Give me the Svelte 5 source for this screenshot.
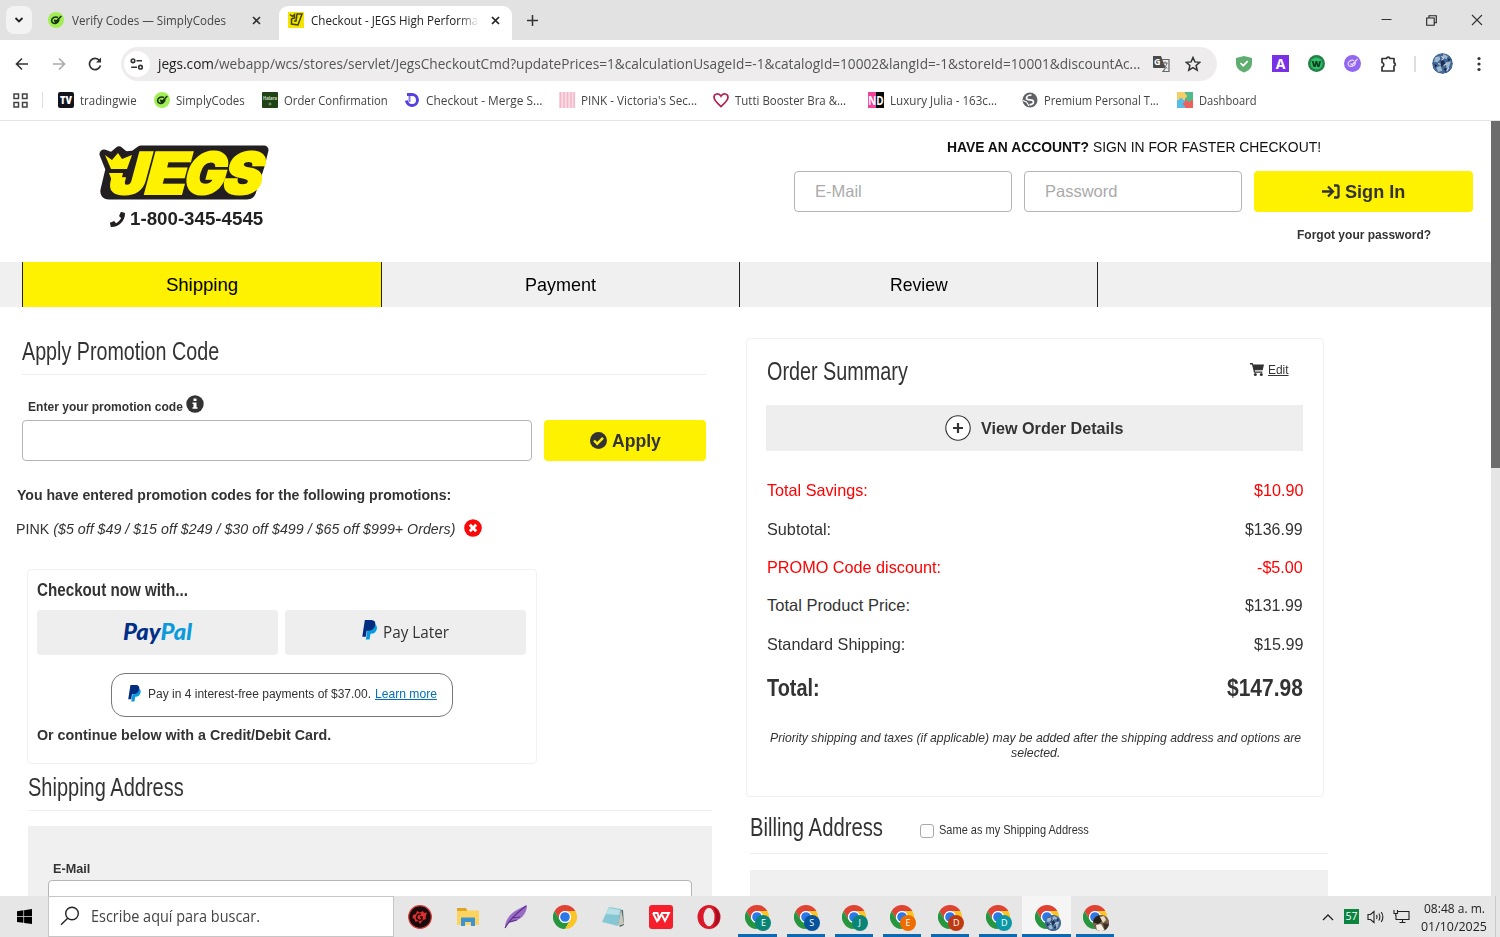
<script>
  const bookmarks = [
    { icon: "tv", label: "tradingwie", text: 57, width: 96 },
    { icon: "simply", label: "SimplyCodes", text: 69, width: 108 },
    { icon: "order", label: "Order Confirmation", text: 104, width: 142 },
    { icon: "merge", label: "Checkout - Merge S...", text: 116, width: 155 },
    { icon: "pink", label: "PINK - Victoria's Sec...", text: 116, width: 154 },
    { icon: "heart", label: "Tutti Booster Bra &...", text: 111, width: 155 },
    { icon: "nd", label: "Luxury Julia - 163c...", text: 107, width: 154 },
    { icon: "globe", label: "Premium Personal T...", text: 115, width: 155 },
    { icon: "puzzle", label: "Dashboard", text: 58, width: 90 },
  ];

  const steps = [
    { name: "Shipping", text: 72 },
    { name: "Payment", text: 71 },
    { name: "Review", text: 58 },
  ];

  const rows = [
    { label: "Total Savings:", value: "$10.90", lw: 101, vw: 49, red: true },
    { label: "Subtotal:", value: "$136.99", lw: 64, vw: 58 },
    { label: "PROMO Code discount:", value: "-$5.00", lw: 174, vw: 46, red: true },
    { label: "Total Product Price:", value: "$131.99", lw: 143, vw: 58 },
    { label: "Standard Shipping:", value: "$15.99", lw: 138, vw: 49 },
  ];

  const profiles = [
    { letter: "E", color: "#0b8478" },
    { letter: "S", color: "#07539c" },
    { letter: "J", color: "#0b8478" },
    { letter: "E", color: "#ef6c00" },
    { letter: "D", color: "#bf3a12" },
    { letter: "D", color: "#0b97a5" },
    { letter: "", color: "#4f6f9f", active: true },
    { letter: "", color: "#8a745c" },
  ];

  const logoLetters = [
    { char: "J", x: 7, width: 37 },
    { char: "E", x: 42, width: 42 },
    { char: "G", x: 81, width: 41 },
    { char: "S", x: 120, width: 39 },
  ];

  let email = "";
  let password = "";
  let promoCode = "";
  let shippingEmail = "";
  let sameAddress = false;

  // condenses a line of text to the given width
  function fit(node, width) {
    const natural = node.offsetWidth;
    node.style.transform = `scaleX(${width / natural})`;
    node.style.marginRight = `${width - natural}px`;
  }
</script>

{#snippet simplyLogo()}
  <svg width="16" height="16" viewBox="0 0 16 16">
    <circle cx="8" cy="8" r="8" fill="#a4ee55" />
    <path d="M10 5.5C7 4 3.5 6 3.6 8.800c.1 2.600 3.600 3.400 5.800 1.600 1-.8 1.600-2 1.400-3L8 9.200 6.300 8l1.400 2L13.300 4" fill="none" stroke="#17330b" stroke-width="1.600" />
  </svg>
{/snippet}

{#snippet chrome()}
  <svg width="24" height="24" viewBox="0 0 48 48">
    <path d="M24 12h20.800A24 24 0 0 0 3.200 12l10.400 18A12 12 0 0 1 24 12z" fill="#df4334" />
    <path d="M13.600 30L3.200 12A24 24 0 0 0 24 48l10.400-18a12 12 0 0 1-20.800 0z" fill="#27963f" />
    <path d="M34.400 30L24 48a24 24 0 0 0 20.800-36H24a12 12 0 0 1 10.400 18z" fill="#fbc526" />
    <circle cx="24" cy="24" r="12" fill="#fff" />
    <circle cx="24" cy="24" r="9.600" fill="#2c78e8" />
  </svg>
{/snippet}

{#snippet paypalMark(height)}
  <svg {height} width={height * 0.76} viewBox="0 0 16 21">
    <path d="M4 20.500L6.500 6l7.500-1.500q2.500 2 1.500 5.500-1.300 4.500-6 4.500H9l-1 6z" fill="#0a9bdf" />
    <path d="M3 0h7q4.500.3 4 5-1 6-7 6.200H5L4 17.500H.3z" fill="#012c80" />
  </svg>
{/snippet}

{#snippet earth(size)}
  <svg width={size} height={size} viewBox="0 0 20 20">
    <circle cx="10" cy="10" r="10" fill="#426894" />
    <path d="M3 4l4-1 1 3-3 3-3-1zM11 1l4 2-1 3-4-2zM13 9l5-1-2 6-2 1zM4 14l4-2 2 5-4 1z" fill="#9fb8cf" />
    <path d="M8 6l3 1 2 4-4 2zM2 10l3 2-2 2zM15 5l3 1-3 2zM11 15l3-1-1 4z" fill="#1b2d56" />
    <path d="M9 3l2 2-2 2M6 10l2 1M11 12l3-2M14 17l2-3" stroke="#d7e2ea" fill="none" />
  </svg>
{/snippet}

<div class="screen">
  <div class="tabstrip">
    <button class="tab-search" aria-label="Search tabs">
      <svg width="10" height="10" viewBox="0 0 10 10"><path d="M1.500 3L5 6.500 8.500 3" fill="none" stroke="#222" stroke-width="1.800" /></svg>
    </button>
    <div class="tab">
      {@render simplyLogo()}
      <span class="fit" use:fit={154}>Verify Codes — SimplyCodes</span>
      <svg class="close" width="9" height="9" viewBox="0 0 9 9"><path d="M1 1l7 7M8 1L1 8" stroke="#333" stroke-width="1.600" /></svg>
    </div>
    <div class="tab active">
      <svg width="16" height="16" viewBox="0 0 16 16">
        <rect width="16" height="16" fill="#f3e500" />
        <path d="M2 2.500l2.500 2 2-2v3.500l-3 1v5l6.500 1L14 2H9L8 9H6" fill="none" stroke="#44420a" stroke-width="1.500" />
      </svg>
      <div class="tab-title"><span class="fit" use:fit={167}>Checkout - JEGS High Performa</span></div>
      <svg class="close" width="9" height="9" viewBox="0 0 9 9"><path d="M1 1l7 7M8 1L1 8" stroke="#222" stroke-width="1.700" /></svg>
    </div>
    <svg class="new-tab" width="11" height="11" viewBox="0 0 11 11"><path d="M5.500 0v11M0 5.500h11" stroke="#333" stroke-width="1.500" /></svg>
    <div class="window-buttons">
      <svg width="11" height="11" viewBox="0 0 11 11"><path d="M.5 4.500h10" stroke="#333" /></svg>
      <svg width="11" height="11" viewBox="0 0 11 11" fill="none" stroke="#222" stroke-width="1.100"><path d="M.7 3h7.500v7.300H.7zM3 3V.8h7.300v7H8.200" /></svg>
      <svg width="12" height="12" viewBox="0 0 12 12"><path d="M1 1l10 10M11 1L1 11" stroke="#333" stroke-width="1.100" /></svg>
    </div>
  </div>

  <div class="toolbar">
    <div class="nav-buttons">
      <svg width="14" height="14" viewBox="0 0 14 14" fill="none" stroke="#333" stroke-width="1.600"><path d="M13 7H2M7 1.500L1.500 7 7 12.500" /></svg>
      <svg width="14" height="14" viewBox="0 0 14 14" fill="none" stroke="#aaa" stroke-width="1.600"><path d="M1 7h11M7 1.500L12.500 7 7 12.500" /></svg>
      <svg width="14" height="14" viewBox="0 0 14 14" fill="none" stroke="#333" stroke-width="1.700"><path d="M12.500 8.500A5.600 5.600 0 1 1 11.500 3.500" /><path d="M13 .5v5H8z" fill="#333" stroke="none" /></svg>
    </div>
    <div class="omnibox">
      <div class="site-info">
        <svg width="14" height="14" viewBox="0 0 14 14" fill="none" stroke="#333" stroke-width="1.600"><circle cx="3" cy="3.800" r="1.800" /><path d="M6.500 3.800H12M1.200 10.200H7" /><circle cx="10.500" cy="10.200" r="1.800" /></svg>
      </div>
      <span class="fit url" use:fit={982}><b>jegs.com</b>/webapp/wcs/stores/servlet/JegsCheckoutCmd?updatePrices=1&calculationUsageId=-1&catalogId=10002&langId=-1&storeId=10001&discountAc...</span>
      <svg width="18" height="18" viewBox="0 0 18 18">
        <path d="M1 1h8l4.500 12H2a1 1 0 0 1-1-1z" fill="#4a4a4a" />
        <path d="M10 4.500h7v12h-6l2.500-3.500" fill="none" stroke="#666" stroke-width="1.200" />
        <text x="2" y="10" font-size="9" font-weight="700" fill="#fff">G</text>
        <path d="M10.500 8h5M13 6.500V8M15 8c-.5 2.500-2 4-3.500 4.800M11.800 9.500c.8 1.700 2 2.800 3.500 3.800" fill="none" stroke="#666" />
      </svg>
      <svg width="16" height="16" viewBox="0 0 16 16" fill="none" stroke="#333" stroke-width="1.500"><path d="M8 1.500l1.900 4.400 4.800.4-3.600 3.200 1.100 4.700L8 11.700l-4.200 2.500 1.100-4.700-3.600-3.200 4.800-.4z" /></svg>
    </div>
    <div class="extensions">
      <svg width="18" height="18" viewBox="0 0 18 18"><path d="M9 1l8 2v5c0 5-3.500 8-8 9.500C4.500 16 1 13 1 8V3z" fill="#5fae70" /><path d="M5.500 8l2.700 2.700 4.500-4.500" fill="none" stroke="#fff" stroke-width="1.700" /></svg>
      <svg width="17" height="17" viewBox="0 0 17 17"><rect width="17" height="17" fill="#7a30e5" /><text x="8.500" y="13.500" font-size="14" font-weight="700" fill="#fff" text-anchor="middle">A</text></svg>
      <svg width="17" height="17" viewBox="0 0 17 17"><circle cx="8.500" cy="8.500" r="8.500" fill="#24804b" /><circle cx="8.500" cy="8.500" r="6" fill="#2fbf66" /><text x="8.500" y="12" font-size="9" font-weight="800" fill="#08351c" text-anchor="middle">W</text></svg>
      <svg width="17" height="17" viewBox="0 0 17 17"><circle cx="8.500" cy="8.500" r="8.500" fill="#9266f2" /><path d="M10 5.500C7 4.500 4 6.500 4 9c.3 2.800 4 3 6 1.500 1.300-1 1.600-2.300 1.200-3.300L8 9.800 6.500 8.500M8 10l5.500-6" fill="none" stroke="#e6dcff" stroke-width="1.200" /></svg>
      <svg width="18" height="18" viewBox="0 0 18 18"><path d="M2 3.500h4.500a1.800 1.800 0 0 1 3.500 0h4v4.300a1.700 1.700 0 0 1 0 3.300v4.900H2v-4a2.300 2.300 0 0 0 0-4.500z" fill="none" stroke="#333" stroke-width="1.700" stroke-linejoin="round" /></svg>
    </div>
    <span class="bar"></span>
    <div class="avatar">{@render earth(21)}</div>
    <svg class="dots" width="4" height="16" viewBox="0 0 4 16" fill="#333"><circle cx="2" cy="2.500" r="1.600" /><circle cx="2" cy="8" r="1.600" /><circle cx="2" cy="13.500" r="1.600" /></svg>
  </div>

  <div class="bookmarks">
    <svg class="apps" width="15" height="15" viewBox="0 0 15 15" fill="none" stroke="#444" stroke-width="1.500"><path d="M1 1h4.500v4.500H1zM9.500 1H14v4.500H9.500zM1 9.500h4.500V14H1zM9.500 9.500H14V14H9.500z" /></svg>
    <span class="bar"></span>
    {#each bookmarks as mark}
      <div class="bookmark" style="width: {mark.width}px">
        {#if mark.icon === "simply"}
          {@render simplyLogo()}
        {:else}
          <svg width="16" height="16" viewBox="0 0 16 16">
            {#if mark.icon === "tv"}
              <rect width="16" height="16" rx="2" fill="#12131c" />
              <text x="8" y="11.800" font-size="10.500" font-weight="800" fill="#fff" text-anchor="middle" textLength="12" lengthAdjust="spacingAndGlyphs">TV</text>
            {:else if mark.icon === "order"}
              <rect width="16" height="16" rx="1" fill="#1f4217" />
              <text x="8" y="8" font-size="4.500" font-weight="700" fill="#cfe0c8" text-anchor="middle" textLength="14" lengthAdjust="spacingAndGlyphs">Halara</text>
              <path d="M8 10.500v3M6.500 12h3" stroke="#8aa682" />
            {:else if mark.icon === "merge"}
              <path d="M3 2.500h5a5.500 5.500 0 1 1-5.500 6" fill="none" stroke="#5540e0" stroke-width="3" />
              <path d="M5.500 4v6" stroke="#8878f0" stroke-width="2" />
            {:else if mark.icon === "pink"}
              <rect width="16" height="16" fill="#fbdde6" />
              <path d="M1.500 0v16M5 0v16M8.500 0v16M12 0v16M15.300 0v16" stroke="#f4b6c9" stroke-width="1.600" />
            {:else if mark.icon === "heart"}
              <path d="M8 14.500C4 11 1 8.500 1 5.300 1 1.500 6 .7 8 4.200c2-3.500 7-2.700 7 1.100 0 3.200-3 5.700-7 9.200z" fill="none" stroke="#ad2450" stroke-width="1.700" />
            {:else if mark.icon === "nd"}
              <rect width="8" height="16" fill="#f0429a" /><rect x="8" width="8" height="16" fill="#0a0a0a" />
              <text x=".3" y="12.500" font-size="12" font-weight="700" fill="#fff" textLength="15.400" lengthAdjust="spacingAndGlyphs">ND</text>
            {:else if mark.icon === "globe"}
              <circle cx="8" cy="8" r="7.500" fill="#5f6265" />
              <path d="M9.500 3C6.500 3 4.500 4.500 4.500 6s2 1.800 3.500 1.800 3.500.5 3.500 2.200-2 2.800-4 2.500" fill="none" stroke="#fff" stroke-width="1.700" />
              <path d="M1 8.500l3.500 1.500 2.500 4" fill="none" stroke="#fff" stroke-width="1.200" />
            {:else}
              <path d="M0 0h8v8H0z" fill="#f5ce67" /><path d="M8 0h8v8H8z" fill="#51b98a" />
              <path d="M0 8h8v8H0z" fill="#54bde8" /><path d="M8 8h8v8H8z" fill="#ed615d" />
              <circle cx="8" cy="4" r="2" fill="#f5ce67" /><circle cx="12" cy="8" r="2" fill="#51b98a" />
              <circle cx="4" cy="8" r="2" fill="#54bde8" /><circle cx="8" cy="12" r="2" fill="#ed615d" />
            {/if}
          </svg>
        {/if}
        <span class="fit" use:fit={mark.text}>{mark.label}</span>
      </div>
    {/each}
  </div>

  <div class="viewport">
    <main>
      <header>
        <div class="brand">
          <svg class="logo" width="172" height="56" viewBox="0 0 172 56">
            <path d="M42 5h123l-4 16-8 24q-1 5-5 5H10q-5 0-4-5l5-21L5 9l8 3 7-6 6 5 9-1z" fill="#231f20" stroke="#231f20" stroke-width="9" stroke-linejoin="round" />
            <g transform="translate(1 49) skewX(-15)">
              {#each logoLetters as letter}
                <text x={letter.x} y="0" class="logo-text" textLength={letter.width} lengthAdjust="spacingAndGlyphs">{letter.char}</text>
              {/each}
            </g>
            <path d="M6 10l7 5 6-7 4 6 10-4-5 14H12z" fill="#fff200" stroke="#231f20" stroke-width="5" stroke-linejoin="round" paint-order="stroke" />
            <path d="M11 25h17" stroke="#231f20" stroke-width="2" />
            <path d="M10 28h14l-2 8h-9z" fill="#fff200" />
          </svg>
          <div class="phone">
            <svg width="15" height="15" viewBox="0 0 512 512"><path d="M493 25L389 1c-11-3-23 3-28 14l-48 112c-4 10-1 21 7 28l61 50c-36 76-98 139-176 176l-50-61c-7-8-18-11-28-7L15 361c-11 5-17 17-14 28l24 104c3 11 12 19 24 19 256 0 463-207 463-463 0-12-8-21-19-24z" fill="#231f20" /></svg>
            <span class="fit" use:fit={133}>1-800-345-4545</span>
          </div>
        </div>
        <form class="sign-in" on:submit|preventDefault>
          <p><span class="fit" use:fit={374}><b>HAVE AN ACCOUNT?</b> SIGN IN FOR FASTER CHECKOUT!</span></p>
          <div class="fields">
            <input type="text" placeholder="E-Mail" bind:value={email} />
            <input type="password" placeholder="Password" bind:value={password} />
            <button class="yellow">
              <svg width="18" height="15" viewBox="0 0 18 15" fill="none" stroke="#333" stroke-width="2.300"><path d="M0 7.500h10M6 2.500l5 5-5 5M12 1.500h3q1.500 0 1.500 1.500v9q0 1.500-1.500 1.500h-3" /></svg>
              <span class="fit" use:fit={60}>Sign In</span>
            </button>
          </div>
          <div class="forgot"><span class="fit" use:fit={134}>Forgot your password?</span></div>
        </form>
      </header>

      <nav>
        {#each steps as step, i}
          <div class="step" class:current={i === 0}><span class="fit" use:fit={step.text}>{step.name}</span></div>
        {/each}
      </nav>

      <div class="columns">
        <section class="left">
          <h2 class="promo-title"><span class="fit" use:fit={197}>Apply Promotion Code</span></h2>
          <label class="promo-label" for="promo">
            <span class="fit" use:fit={155}>Enter your promotion code</span>
            <svg width="18" height="18" viewBox="0 0 18 18"><circle cx="9" cy="9" r="8.700" fill="#333" /><path d="M7.500 3.500h3V6h-3zM6.500 7.500h4v4.700h1v1.600h-5v-1.600h1V9h-1z" fill="#fff" /></svg>
          </label>
          <div class="promo-row">
            <input id="promo" type="text" bind:value={promoCode} />
            <button class="yellow">
              <svg width="17" height="17" viewBox="0 0 17 17"><circle cx="8.500" cy="8.500" r="8.500" fill="#333" /><path d="M4 8.500l3.200 3.200L13 5.800" fill="none" stroke="#fff200" stroke-width="2.400" /></svg>
              <span class="fit" use:fit={49}>Apply</span>
            </button>
          </div>
          <p class="entered"><span class="fit" use:fit={434}>You have entered promotion codes for the following promotions:</span></p>
          <div class="applied">
            <span class="fit" use:fit={439}>PINK <i>($5 off $49 / $15 off $249 / $30 off $499 / $65 off $999+ Orders)</i></span>
            <svg width="18" height="18" viewBox="0 0 18 18"><circle cx="9" cy="9" r="8.800" fill="#f80808" /><path d="M5.800 5.800l6.400 6.400M12.200 5.800l-6.400 6.400" stroke="#fff" stroke-width="2.800" /></svg>
          </div>

          <div class="express">
            <h3><span class="fit" use:fit={151}>Checkout now with...</span></h3>
            <div class="pay-buttons">
              <button aria-label="PayPal">
                <svg width="72" height="32" viewBox="0 0 72 32">
                  <text x="1" y="22.500" class="paypal" textLength="69" lengthAdjust="spacingAndGlyphs"><tspan fill="#012f87">Pay</tspan><tspan fill="#0b9bdc">Pal</tspan></text>
                </svg>
              </button>
              <button class="later">
                {@render paypalMark(20)}
                <span class="fit pay-later" use:fit={66}>Pay Later</span>
              </button>
            </div>
            <div class="pay-message">
              {@render paypalMark(17)}
              <span class="fit" use:fit={223}>Pay in 4 interest-free payments of $37.00.</span>
              <a class="fit" href="#learn" use:fit={62}>Learn more</a>
            </div>
            <p class="or-card"><span class="fit" use:fit={294}>Or continue below with a Credit/Debit Card.</span></p>
          </div>

          <div class="address">
            <h2><span class="fit" use:fit={156}>Shipping Address</span></h2>
            <div class="address-form">
              <label for="ship-email"><span class="fit" use:fit={37}>E-Mail</span></label>
              <input id="ship-email" type="text" bind:value={shippingEmail} />
            </div>
          </div>
        </section>

        <section class="right">
          <div class="summary">
            <div class="summary-head">
              <h2><span class="fit" use:fit={141}>Order Summary</span></h2>
              <div class="edit">
                <svg width="14" height="13" viewBox="0 0 14 13" fill="#333"><path d="M0 0h2.800l.4 1.600H14l-1.300 5.600H4.800l.3 1.300h7.300v1.300H4L2 1.400H0z" /><circle cx="5.300" cy="11.400" r="1.500" /><circle cx="11.300" cy="11.400" r="1.500" /></svg>
                <a class="fit" href="#cart" use:fit={21}>Edit</a>
              </div>
            </div>
            <button class="details">
              <svg width="26" height="26" viewBox="0 0 26 26"><circle cx="13" cy="13" r="12.200" fill="#fff" stroke="#333" stroke-width="1.100" /><path d="M13 8v10M8 13h10" stroke="#333" stroke-width="2.200" /></svg>
              <span class="fit" use:fit={143}>View Order Details</span>
            </button>
            <div class="rows">
              {#each rows as row}
                <div class="row" class:red={row.red}>
                  <span class="fit" use:fit={row.lw}>{row.label}</span>
                  <span class="fit" use:fit={row.vw}>{row.value}</span>
                </div>
              {/each}
            </div>
            <div class="total">
              <span class="fit" use:fit={53}>Total:</span>
              <span class="fit" use:fit={76}>$147.98</span>
            </div>
            <div class="note">
              <span class="fit" use:fit={531}>Priority shipping and taxes (if applicable) may be added after the shipping address and options are</span>
              <span class="fit" use:fit={49}>selected.</span>
            </div>
          </div>
          <div class="billing">
            <div class="billing-head">
              <h2><span class="fit" use:fit={133}>Billing Address</span></h2>
              <input id="same" type="checkbox" bind:checked={sameAddress} />
              <label for="same"><span class="fit" use:fit={150}>Same as my Shipping Address</span></label>
            </div>
            <div class="billing-form"></div>
          </div>
        </section>
      </div>
    </main>
    <div class="scrollbar"><div class="thumb"></div></div>
  </div>

  <footer class="taskbar">
    <div class="start">
      <svg width="15" height="15" viewBox="0 0 15 15"><path d="M0 2.200L6.400 1.300v5.900H0zM7.100 1.200L15 0v7.200H7.100zM0 7.900h6.400v5.900L0 12.900zM7.100 7.900H15V15l-7.900-1.100z" /></svg>
    </div>
    <div class="search">
      <svg width="20" height="20" viewBox="0 0 20 20" fill="none" stroke="#222" stroke-width="1.400"><circle cx="12" cy="7.500" r="6.300" /><path d="M7.700 12.200L1 18.800" /></svg>
      <span class="fit" use:fit={169}>Escribe aquí para buscar.</span>
    </div>
    <div class="apps-row">
      <div class="app"><svg width="24" height="24" viewBox="0 0 24 24"><circle cx="12" cy="12" r="11.300" fill="#190b0c" stroke="#d63b3b" stroke-width="1.200" /><path d="M5 10l3-1 1-3 3 1.500L15 6l1 2 3-.5-1.500 4.500.5 2-3 1-3 4-1.500-3-3 1-1-3-2-1z" fill="#e12e2e" /><path d="M13 9.500a3 3 0 1 0 1 4.500v-2h-2" fill="none" stroke="#190b0c" stroke-width="1.400" /></svg></div>
      <div class="app"><svg width="24" height="20" viewBox="0 0 24 20"><path d="M1 1h9l2 2.500h11V18H1z" fill="#fbd35e" /><path d="M1 1h9l1 3H1z" fill="#e0a524" /><path d="M5 19v-7.500q0-1 1-1h12q1 0 1 1V19h-4v-4H9v4z" fill="#3e93cf" /></svg></div>
      <div class="app"><svg width="24" height="25" viewBox="0 0 24 25"><path d="M1 24C1 14 8 7 23 1c0 9-6 16-19 18z" fill="#9b6cc4" /><path d="M1 24C7 14 13 9 22 2M5 18l8-2M8 14l8-1" fill="none" stroke="#5c2f91" stroke-width="1.200" /></svg></div>
      <div class="app">{@render chrome()}</div>
      <div class="app"><svg width="24" height="24" viewBox="0 0 24 24"><path d="M8 3l14 2 1 15-4 2z" fill="#586b70" /><path d="M8 2l12 2-3 17L1 17z" fill="#86c7d6" /><path d="M8 3l11 2-1 5L5 9z" fill="#b9e0e7" /><path d="M20 4l3 15-6 2z" fill="#c8c8ba" /></svg></div>
      <div class="app"><svg width="24" height="24" viewBox="0 0 24 24"><rect width="24" height="24" rx="3" fill="#f5202c" /><path d="M4 8h4.500l1.500 6 3-6h7l-4 8-3-6M4 8l4 8 3-5" fill="none" stroke="#fff" stroke-width="1.900" /></svg></div>
      <div class="app"><svg width="24" height="24" viewBox="0 0 24 24"><ellipse cx="12" cy="12" rx="11.500" ry="12" fill="#d9182a" /><path d="M16 2c4 4 4 16 0 20 9-4 9-16 0-20z" fill="#a50f20" /><ellipse cx="12" cy="12" rx="5.500" ry="9.300" fill="#e7e7e7" /></svg></div>
      {#each profiles as profile, i}
        <div class="app open" class:front={profile.active}>
          <div class="profile">
            {@render chrome()}
            <div class="badge" style="background: {profile.color}">
              {#if profile.active}{@render earth(16)}{:else if i === 7}
                <svg width="16" height="16" viewBox="0 0 16 16"><path d="M0 0h16v16H0z" fill="#77634c" /><path d="M0 0h6l3 6-4 3-5-2z" fill="#282019" /><path d="M7 2l4-1 2 4-3 3z" fill="#ead9c3" /><path d="M3 10l5-1 4 7H4z" fill="#f4eee5" /><path d="M10 8l6 1v7h-4z" fill="#3a3026" /></svg>
              {:else}{profile.letter}{/if}
            </div>
          </div>
        </div>
      {/each}
    </div>
    <div class="tray">
      <svg width="12" height="8" viewBox="0 0 12 8"><path d="M1 7l5-5 5 5" fill="none" stroke="#222" stroke-width="1.300" /></svg>
      <span class="temp">57</span>
      <svg width="18" height="14" viewBox="0 0 18 14" fill="none" stroke="#222" stroke-width="1.100"><path d="M1 4.500h2.500L7 1.500v11L3.500 9.500H1zM9.500 5q1 2 0 4M11.800 3.500q2.200 3.500 0 7M14.200 2q3.400 5 0 10" /></svg>
      <svg width="17" height="15" viewBox="0 0 17 15" fill="none" stroke="#222" stroke-width="1.100"><path d="M5 2.500h11v8H3V6M9.500 10.500V13M6.500 13.500h6M1 1v3.500h3.500V1M2.700 4.500V7" /></svg>
      <div class="clock">
        <span class="fit" use:fit={61}>08:48 a. m.</span>
        <span class="fit" use:fit={66}>01/10/2025</span>
      </div>
    </div>
  </footer>
</div>

<style>
  :global(body) {
    margin: 0;
    overflow: hidden;
  }

  .screen {
    width: 1500px;
    height: 937px;
    display: flex;
    flex-direction: column;
    background: #fff;
    color: #333;
    font-family: "Liberation Sans", Arial, sans-serif;
  }

  .screen :global(svg) {
    display: block;
    flex: none;
  }

  .fit {
    display: inline-block;
    flex: none;
    white-space: nowrap;
    transform-origin: left;
  }

  button,
  input {
    font-family: inherit;
    color: inherit;
    border: 0;
    padding: 0;
    margin: 0;
    box-sizing: border-box;
  }

  h2,
  h3,
  p {
    margin: 0;
  }

  .tabstrip,
  .toolbar,
  .bookmarks,
  .taskbar {
    font-family: "Open Sans", "Noto Sans", sans-serif;
    display: flex;
    align-items: center;
    flex: none;
  }

  .tabstrip {
    height: 40px;
    background: #e2e2e2;
    font-size: 12.8px;
    color: #444;
  }

  .tab-search {
    width: 26px;
    height: 28px;
    margin-left: 6px;
    display: grid;
    place-items: center;
    border-radius: 8px;
    background: #f3f3f3;
  }

  .tab {
    display: flex;
    align-items: center;
    gap: 8px;
    width: 231px;
    height: 34px;
    margin-top: 6px;
    padding: 0 2px 6px 16px;
    box-sizing: border-box;
  }

  .tab.active {
    width: 233px;
    padding: 0 12px 6px 9px;
    gap: 7px;
    margin-left: 16px;
    border-radius: 9px 9px 0 0;
    background: #fff;
    color: #222;
  }

  .tab-title {
    width: 168px;
    mask-image: linear-gradient(90deg, #000 88%, transparent);
  }

  .close {
    margin-left: auto;
  }

  .new-tab {
    margin-left: 15px;
  }

  .window-buttons {
    display: flex;
    align-items: center;
    gap: 34px;
    margin-left: auto;
    margin-right: 17px;
  }

  .toolbar {
    height: 47px;
    font-size: 14.4px;
  }

  .nav-buttons {
    display: flex;
    gap: 22.5px;
    margin-left: 15px;
    width: 106px;
  }

  .omnibox {
    display: flex;
    align-items: center;
    width: 1096px;
    height: 34px;
    border-radius: 17px;
    background: #eeecec;
    color: #555;
  }

  .url {
    margin-left: 8px;
    margin-top: -1px;
  }

  .url b {
    font-weight: 400;
    color: #222;
  }

  .omnibox > svg:first-of-type {
    margin-left: 12px;
    margin-right: 15px;
  }

  .site-info {
    width: 26px;
    height: 26px;
    margin-left: 3px;
    border-radius: 50%;
    display: grid;
    place-items: center;
    background: #fff;
  }

  .extensions {
    display: flex;
    align-items: center;
    gap: 19px;
    margin-left: 18px;
  }

  .bar {
    width: 2px;
    height: 16px;
    background: #dedede;
  }

  .toolbar > .bar {
    margin-left: 16px;
  }

  .avatar {
    margin-left: 16px;
    border-radius: 50%;
    overflow: hidden;
  }

  .dots {
    margin-left: 24px;
  }

  .bookmarks {
    height: 34px;
    box-sizing: border-box;
    padding-bottom: 7px;
    border-bottom: 1px solid #e4e4e4;
    font-size: 12.5px;
    color: #444;
  }

  .apps {
    margin-left: 13px;
  }

  .bookmarks .bar {
    margin: 0 15px 0 14px;
    width: 1px;
  }

  .bookmark {
    display: flex;
    align-items: center;
    gap: 6px;
    flex: none;
  }

  .viewport {
    display: flex;
    height: 775px;
    overflow: hidden;
  }

  main {
    width: 1491px;
  }

  .scrollbar {
    width: 9px;
    background: #e5e5e5;
  }

  .thumb {
    height: 347px;
    background: #6c6c6c;
  }

  header {
    display: flex;
    justify-content: space-between;
    height: 141px;
  }

  .brand {
    padding: 24px 0 0 99px;
  }

  .logo {
    overflow: visible;
  }

  .logo-text {
    font-family: Inter, sans-serif;
    font-weight: 900;
    font-size: 57.5px;
    fill: #fff200;
    stroke: #fff200;
    stroke-width: 2px;
  }

  .phone {
    display: flex;
    align-items: center;
    gap: 5px;
    height: 22px;
    margin: 7px 0 0 11px;
    font-size: 17.6px;
    font-weight: 700;
    color: #222;
  }

  .sign-in {
    width: 679px;
    margin-right: 18px;
  }

  .sign-in p {
    height: 50px;
    line-height: 52px;
    text-align: center;
    font-size: 15.4px;
    color: #111;
  }

  .fields {
    display: flex;
    gap: 12px;
  }

  input[type="text"],
  input[type="password"] {
    height: 41px;
    border: 1px solid #b5b5b5;
    border-radius: 4px;
    background: #fff;
    outline: none;
  }

  .fields input {
    width: 218px;
    padding-left: 20px;
    font-size: 16.5px;
  }

  .fields input::placeholder {
    color: #aaa;
  }

  .yellow {
    display: flex;
    justify-content: center;
    align-items: center;
    gap: 5px;
    width: 219px;
    height: 41px;
    border-radius: 4px;
    background: #fff200;
    font-size: 18.7px;
    font-weight: 700;
  }

  .forgot {
    width: 218px;
    margin: 15px 0 0 auto;
    text-align: center;
    font-size: 13px;
    font-weight: 700;
  }

  nav {
    display: flex;
    height: 45px;
    padding-left: 22px;
    background: #f0f0f0;
  }

  .step {
    width: 358px;
    box-sizing: border-box;
    border-right: 1px solid #222;
    display: flex;
    align-items: center;
    justify-content: center;
    font-size: 18.5px;
    color: #000;
    padding-top: 1px;
  }

  .step.current {
    width: 360px;
    background: #fff200;
    border-left: 1px solid #222;
  }

  .columns {
    display: flex;
  }

  .left {
    width: 746px;
  }

  h2 {
    font-size: 25px;
    line-height: 30px;
    font-weight: 400;
  }

  .promo-title {
    width: 684px;
    margin: 29px 0 0 22px;
    padding-bottom: 8px;
    border-bottom: 1px solid #eee;
  }

  .promo-label {
    display: flex;
    gap: 3px;
    margin: 20px 0 0 28px;
    height: 25px;
    font-size: 12.7px;
    line-height: 24px;
    font-weight: 700;
  }

  .promo-row {
    display: flex;
    gap: 12px;
    margin-left: 22px;
  }

  .promo-row input {
    width: 510px;
    padding: 0 10px;
  }

  .promo-row .yellow {
    width: 162px;
  }

  .entered {
    margin: 24px 0 0 16.5px;
    font-size: 15.4px;
    line-height: 20px;
    font-weight: 700;
  }

  .applied {
    display: flex;
    align-items: center;
    gap: 9px;
    margin: 14px 0 0 16px;
    height: 20px;
    font-size: 15.4px;
  }

  .applied svg {
    margin-top: -2px;
  }

  .express {
    width: 510px;
    height: 195px;
    box-sizing: border-box;
    margin: 30px 0 0 27px;
    padding: 10px 9px;
    border: 1px solid #f1f1f1;
    border-radius: 4px;
  }

  .express h3 {
    font-size: 17.5px;
    line-height: 20px;
  }

  .pay-buttons {
    display: flex;
    gap: 7px;
    margin-top: 10px;
  }

  .pay-buttons button {
    display: flex;
    align-items: center;
    justify-content: center;
    gap: 6px;
    width: 241px;
    height: 45px;
    border-radius: 4px;
    background: #eee;
  }

  .later :global(svg) {
    margin-top: -5px;
  }

  .paypal {
    font-family: Lato, "Open Sans", sans-serif;
    font-weight: 900;
    font-style: italic;
    font-size: 23px;
  }

  .pay-later {
    font-family: "Open Sans", sans-serif;
    font-weight: 500;
    font-size: 15.5px;
    margin-top: -1px;
  }

  .pay-message {
    display: flex;
    align-items: center;
    width: 342px;
    height: 44px;
    box-sizing: border-box;
    margin: 18px 0 0 74px;
    padding: 0 0 3px 16px;
    border: 1px solid #777;
    border-radius: 14px;
    font-size: 12.5px;
  }

  .pay-message span {
    margin-left: 7px;
  }

  .pay-message a {
    margin-left: 4px;
    color: #0070ba;
  }

  .or-card {
    margin-top: 8px;
    font-size: 15.4px;
    line-height: 20px;
    font-weight: 700;
  }

  .address {
    width: 684px;
    margin-left: 28px;
  }

  .address h2 {
    padding: 8px 0;
    border-bottom: 1px solid #eee;
  }

  .address-form {
    width: 644px;
    height: 110px;
    margin-top: 15px;
    padding: 33px 20px 0;
    background: #f0f0f0;
  }

  .address-form label {
    display: block;
    margin-left: 5px;
    height: 21px;
    line-height: 20px;
    font-size: 12.3px;
    font-weight: 700;
  }

  .address-form input {
    width: 644px;
  }

  .summary {
    width: 578px;
    height: 459px;
    box-sizing: border-box;
    margin-top: 31px;
    padding: 17px 20px 0 19px;
    border: 1px solid #f1f1f1;
    border-radius: 4px;
  }

  .summary-head {
    display: flex;
    justify-content: space-between;
    padding-left: 1px;
  }

  .edit {
    display: flex;
    align-items: center;
    gap: 4px;
    margin-right: 14px;
    padding-bottom: 3px;
    font-size: 12.5px;
  }

  .edit a {
    color: #333;
  }

  .details {
    display: flex;
    align-items: center;
    justify-content: center;
    gap: 10px;
    width: 537px;
    height: 46px;
    margin-top: 19px;
    background: #eee;
    font-size: 16.5px;
    font-weight: 700;
  }

  .rows {
    margin: 20.5px 0 0 1px;
    font-size: 16.5px;
  }

  .row {
    display: flex;
    justify-content: space-between;
    align-items: center;
    height: 38.4px;
  }

  .red {
    color: #f00;
  }

  .total {
    display: flex;
    justify-content: space-between;
    align-items: center;
    height: 50px;
    margin-left: 1px;
    font-size: 24px;
    font-weight: 700;
  }

  .note {
    display: flex;
    flex-direction: column;
    align-items: center;
    margin: 17.5px 0 0 2px;
    font-size: 12.6px;
    line-height: 15.4px;
    font-style: italic;
  }

  .billing {
    width: 578px;
    margin-left: 4px;
  }

  .billing-head {
    display: flex;
    align-items: center;
    height: 56px;
    border-bottom: 1px solid #eee;
  }

  .billing h2 {
    padding-top: 4px;
  }

  .billing-head input {
    width: 14px;
    height: 14px;
    margin: 11px 5px 0 37px;
    appearance: none;
    border: 1px solid #aaa;
    border-radius: 3px;
  }

  .billing-head label {
    padding-top: 9px;
    font-size: 13.5px;
  }

  .billing-form {
    height: 100px;
    margin-top: 16px;
    background: #f0f0f0;
  }

  .taskbar {
    height: 41px;
    background: #e6e6e6;
    color: #222;
  }

  .start {
    width: 48px;
    height: 41px;
    display: grid;
    place-items: center;
  }

  .search {
    display: flex;
    align-items: center;
    gap: 11px;
    width: 346px;
    height: 41px;
    box-sizing: border-box;
    padding: 0 0 1px 11px;
    border: 1px solid #c6c6c6;
    background: #fff;
    font-size: 15.4px;
    color: #444;
  }

  .apps-row {
    display: flex;
    height: 41px;
    margin-left: 2px;
  }

  .app {
    display: flex;
    align-items: center;
    justify-content: center;
    width: 48.2px;
    box-sizing: border-box;
  }

  .open {
    width: 38.2px;
    margin: 0 5px;
    border-bottom: 3px solid #0d69b2;
    padding-top: 3px;
  }

  .front {
    width: 48.2px;
    margin: 0;
    background: #f5f5f5;
  }

  .profile {
    position: relative;
  }

  .badge {
    position: absolute;
    left: 10px;
    top: 10px;
    width: 16px;
    height: 16px;
    border-radius: 50%;
    overflow: hidden;
    text-align: center;
    font-size: 9px;
    line-height: 16px;
    color: #fff;
  }

  .tray {
    display: flex;
    align-items: center;
    gap: 8px;
    height: 41px;
    margin-left: auto;
    margin-right: 4px;
    padding-right: 8px;
    border-right: 1px solid #c9c9c9;
  }

  .tray > svg:first-child {
    margin-right: 2px;
  }

  .temp {
    width: 15px;
    height: 15px;
    background: #0b8440;
    color: #fff;
    font-size: 10.5px;
    line-height: 15px;
    text-align: center;
  }

  .clock {
    display: flex;
    flex-direction: column;
    align-items: center;
    width: 66px;
    margin-left: 3px;
    padding-top: 1px;
    font-size: 12.8px;
    line-height: 18.5px;
  }
</style>
